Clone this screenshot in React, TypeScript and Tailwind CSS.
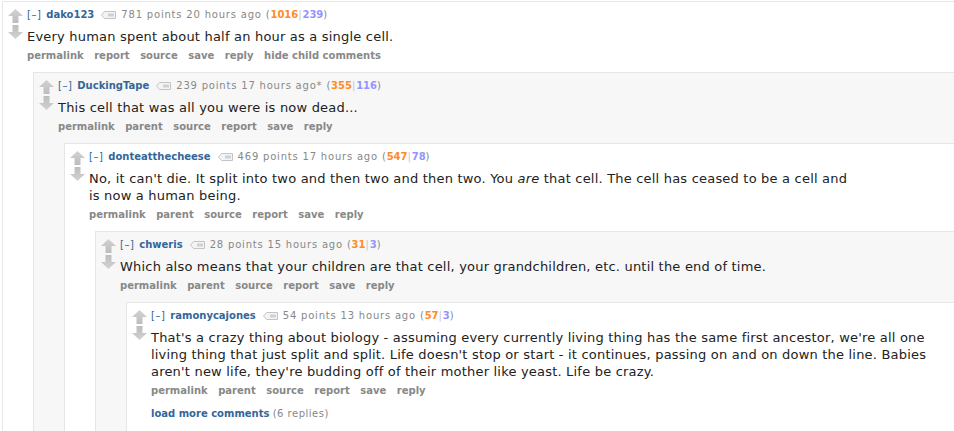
import React from 'react'

interface CommentData {
    user: string
    points: number
    time: string
    up: number
    down: number
    body: React.ReactNode
    buttons: string[]
    loadMore?: number
}

const comments: CommentData[] = [
    {
        user: 'dako123',
        points: 781,
        time: '20 hours ago',
        up: 1016,
        down: 239,
        body: 'Every human spent about half an hour as a single cell.',
        buttons: ['permalink', 'report', 'source', 'save', 'reply', 'hide child comments'],
    },
    {
        user: 'DuckingTape',
        points: 239,
        time: '17 hours ago*',
        up: 355,
        down: 116,
        body: 'This cell that was all you were is now dead...',
        buttons: ['permalink', 'parent', 'source', 'report', 'save', 'reply'],
    },
    {
        user: 'donteatthecheese',
        points: 469,
        time: '17 hours ago',
        up: 547,
        down: 78,
        body: (
            <>
                No, it can't die. It split into two and then two and then two. You <em>are</em> that cell. The cell has ceased to be a cell and
                <br />
                is now a human being.
            </>
        ),
        buttons: ['permalink', 'parent', 'source', 'report', 'save', 'reply'],
    },
    {
        user: 'chweris',
        points: 28,
        time: '15 hours ago',
        up: 31,
        down: 3,
        body: 'Which also means that your children are that cell, your grandchildren, etc. until the end of time.',
        buttons: ['permalink', 'parent', 'source', 'report', 'save', 'reply'],
    },
    {
        user: 'ramonycajones',
        points: 54,
        time: '13 hours ago',
        up: 57,
        down: 3,
        body: (
            <>
                That's a crazy thing about biology - assuming every currently living thing has the same first ancestor, we're all one
                <br />
                living thing that just split and split. Life doesn't stop or start - it continues, passing on and on down the line. Babies
                <br />
                aren't new life, they're budding off of their mother like yeast. Life be crazy.
            </>
        ),
        buttons: ['permalink', 'parent', 'source', 'report', 'save', 'reply'],
        loadMore: 6,
    },
]

function VoteArrow({ down }: { down?: boolean }) {
    return (
        <svg width="15" height="14" viewBox="0 0 15 14" className={down ? 'block rotate-180' : 'block'}>
            <defs>
                <linearGradient id="arrowShade" x1="0" y1="0" x2="0" y2="1">
                    <stop offset="0" stopColor="#d2d2d2" />
                    <stop offset="1" stopColor="#bdbdbd" />
                </linearGradient>
            </defs>
            <path d="M7.5 0 L15 7 H10.5 V14 H4.5 V7 H0 Z" fill="url(#arrowShade)" />
        </svg>
    )
}

function TagIcon() {
    return (
        <svg width="15" height="8" viewBox="0 0 15 8" className="ml-[7px] mr-[5px] inline-block align-[-1px]">
            <path d="M0.5 4 L3.5 0.5 H14.5 V7.5 H3.5 Z" fill="#f4f4f4" stroke="#c4c4c4" />
            <rect x="7" y="2.5" width="6" height="3" fill="#c9d3de" />
        </svg>
    )
}

function Comment({ index }: { index: number }) {
    const c = comments[index]
    const gray = index % 2 === 1
    return (
        <div
            className={
                (index === 0 ? 'ml-[2px] mt-[1px] ' : 'ml-[30px] mt-[10px] ') +
                'border-l border-t border-[#e6e6e6] pb-[30px] ' +
                (gray ? 'bg-[#f7f7f7]' : 'bg-white')
            }
        >
            <div className="flex">
                <div className="flex w-[24px] shrink-0 flex-col gap-[2px] pl-[5px] pt-[7px]">
                    <VoteArrow />
                    <VoteArrow down />
                </div>
                <div className="min-w-0 flex-1">
                    <p className="whitespace-nowrap pt-[7px] text-[10px] leading-[12px] tracking-[0.8px] text-[#888]">
                        <a className="tracking-[0.5px] text-[#369]">[–]</a>{' '}
                        <a className="ml-[1px] font-bold tracking-normal text-[#369]">{c.user}</a>
                        <TagIcon />
                        {c.points} points {c.time} (
                        <span className="font-bold tracking-normal text-[#ff8b24]">{c.up}</span>
                        <span className="text-[#c6c6c6]">|</span>
                        <span className="font-bold tracking-normal text-[#9494ff]">{c.down}</span>)
                    </p>
                    <div className="mt-[6.5px] whitespace-nowrap text-[13px] leading-[17px] tracking-[0.2px] text-[#222]">{c.body}</div>
                    <ul className="mt-[5.5px] flex gap-[10.5px] text-[10px] font-bold leading-[12px] text-[#888]">
                        {c.buttons.map((b) => (
                            <li key={b}>{b}</li>
                        ))}
                    </ul>
                    {c.loadMore && (
                        <p className="mt-[11px] text-[10px] leading-[12px] text-[#888]">
                            <a className="font-bold text-[#369]">load more comments</a>{' '}
                            <span className="tracking-[0.5px]">({c.loadMore} replies)</span>
                        </p>
                    )}
                </div>
            </div>
            {index + 1 < comments.length && <Comment index={index + 1} />}
        </div>
    )
}

export default function App() {
    return (
        <div className="h-[431px] w-[954px] overflow-hidden bg-white font-['DejaVu_Sans',Verdana,sans-serif]">
            <Comment index={0} />
        </div>
    )
}
